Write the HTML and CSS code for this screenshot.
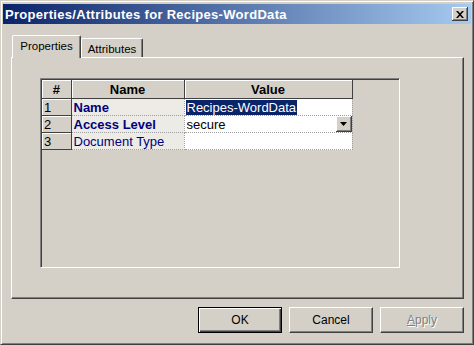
FILE: index.html
```html
<!DOCTYPE html>
<html>
<head>
<meta charset="utf-8">
<title>Properties/Attributes for Recipes-WordData</title>
<link rel="stylesheet" href="styles.css">
</head>
<body>
<div class="window">
  <div class="titlebar">
    <span class="title">Properties/Attributes for Recipes-WordData</span>
    <span class="close"><svg width="8" height="7" viewBox="0 0 8 7"><path d="M0 0h2l2 2.2L6 0h2L5 3.5 8 7H6L4 4.8 2 7H0l3-3.5z" fill="#000"/></svg></span>
  </div>
  <div class="tabs">
    <div class="tab active">Properties</div>
    <div class="tab">Attributes</div>
  </div>
  <div class="panel">
    <div class="gridbox">
      <table class="grid">
        <colgroup><col class="c-num"><col class="c-name"><col class="c-val"></colgroup>
        <thead>
          <tr><th>#</th><th>Name</th><th>Value</th></tr>
        </thead>
        <tbody>
          <tr>
            <td class="num">1</td>
            <td class="name bold">Name</td>
            <td class="val"><span class="sel">Recipes-WordData</span></td>
          </tr>
          <tr>
            <td class="num">2</td>
            <td class="name bold">Access Level</td>
            <td class="val"><div class="combo"><span>secure</span><span class="drop"><svg width="7" height="4" viewBox="0 0 7 4"><path d="M0 0h7L3.5 4z" fill="#000"/></svg></span></div></td>
          </tr>
          <tr>
            <td class="num">3</td>
            <td class="name">Document Type</td>
            <td class="val"></td>
          </tr>
        </tbody>
      </table>
    </div>
  </div>
  <div class="buttons">
    <button class="btn default">OK</button>
    <button class="btn">Cancel</button>
    <button class="btn disabled"><u>A</u>pply</button>
  </div>
</div>
</body>
</html>
```
FILE: styles.css
```css
html, body {
  margin: 0;
  background: #d4d0c8;
}

.window {
  box-sizing: border-box;
  width: 474px;
  height: 345px;
  border: 1px solid;
  border-color: #d4d0c8 #404040 #404040 #d4d0c8;
  box-shadow: inset 1px 1px #fff, inset -1px -1px #808080;
  padding: 3px 2px 2px 2px;
  font-family: "Liberation Sans", Arial, sans-serif;
}

.titlebar {
  height: 20px;
  display: flex;
  align-items: center;
  justify-content: space-between;
  padding: 0 3px 0 2px;
  background: linear-gradient(to right, #0a246a, #a6caf0);
}

.title {
  color: #fff;
  font-weight: bold;
  font-size: 13px;
  letter-spacing: 0.3px;
}

.close {
  box-sizing: border-box;
  width: 16px;
  height: 14px;
  display: flex;
  align-items: center;
  justify-content: center;
  background: #d4d0c8;
  box-shadow: inset -1px -1px #404040, inset 1px 1px #fff, inset -2px -2px #808080;
}

.tabs {
  display: flex;
  align-items: flex-end;
  height: 22px;
  margin: 11px 0 0 9px;
  position: relative;
  z-index: 1;
}

.tab {
  box-sizing: border-box;
  height: 19px;
  width: 62px;
  font-size: 11.5px;
  display: flex;
  align-items: center;
  justify-content: center;
  background: #d4d0c8;
  border-top: 1px solid #fff;
  border-left: 1px solid #fff;
  border-right: 1px solid #404040;
  box-shadow: inset -1px 0 #808080;
  border-radius: 2px 2px 0 0;
  padding-top: 1px;
}

.tab.active {
  width: 69px;
  height: 23px;
  margin-bottom: -1px;
  padding-bottom: 3px;
}

.panel {
  box-sizing: border-box;
  width: 453px;
  height: 242px;
  margin-left: 8px;
  border-top: 1px solid #fff;
  border-left: 1px solid #fff;
  border-right: 1px solid #404040;
  border-bottom: 1px solid #404040;
  box-shadow: inset -1px -1px #808080;
  padding: 20px 0 0 28px;
}

.gridbox {
  box-sizing: border-box;
  width: 360px;
  height: 190px;
  border-top: 1px solid #808080;
  border-left: 1px solid #808080;
  border-right: 1px solid #fff;
  border-bottom: 1px solid #fff;
  box-shadow: inset 1px 1px #404040, inset -1px -1px #d4d0c8;
  padding: 1px 0 0 1px;
}

.grid {
  border-collapse: collapse;
  table-layout: fixed;
  width: 310px;
  font-size: 13px;
}

.c-num { width: 29px; }
.c-name { width: 113px; }
.c-val { width: 168px; }

.grid th {
  height: 18px;
  padding: 0;
  font-weight: bold;
  color: #000;
  background: #d4d0c8;
  border-right: 1px solid #404040;
  border-bottom: 1px solid #404040;
  box-shadow: inset 1px 1px #fff;
}

.grid td {
  height: 16px;
  padding: 0;
  line-height: 15px;
  border-bottom: 1px dotted #a0a0a0;
  border-right: 1px dotted #a0a0a0;
  white-space: nowrap;
}

.grid td.num {
  background: #d4d0c8;
  border-right: 1px solid #404040;
  border-bottom: 1px solid #404040;
  box-shadow: inset 1px 1px #fff;
  padding-left: 2px;
}

.grid td.name {
  background: #ecebe6;
  color: #00007f;
  padding-left: 2px;
}

.grid td.bold {
  font-weight: bold;
}

.grid td.val {
  background: #fff;
  color: #000;
  padding-left: 1px;
}

.sel {
  background: #0a246a;
  color: #fff;
  padding: 0 1px;
}

.combo {
  display: flex;
  align-items: center;
  justify-content: space-between;
  padding-left: 1px;
}

.drop {
  box-sizing: border-box;
  width: 16px;
  height: 16px;
  display: flex;
  align-items: center;
  justify-content: center;
  background: #d4d0c8;
  box-shadow: inset -1px -1px #404040, inset 1px 1px #fff, inset -2px -2px #808080;
}

.buttons {
  display: flex;
  justify-content: flex-end;
  gap: 7px;
  margin: 8px 7px 0 0;
}

.btn {
  box-sizing: border-box;
  width: 84px;
  height: 26px;
  margin: 0;
  padding: 0;
  font-family: "Liberation Sans", Arial, sans-serif;
  font-size: 12px;
  color: #000;
  background: #d4d0c8;
  border: 1px solid;
  border-color: #fff #404040 #404040 #fff;
  box-shadow: inset -1px -1px #808080;
}

.btn.default {
  border: 1px solid #000;
  box-shadow: inset 1px 1px #fff, inset -1px -1px #404040, inset -2px -2px #808080;
}

.btn.disabled {
  color: #808080;
  text-shadow: 1px 1px #fff;
}

.btn.disabled u {
  text-decoration-color: #808080;
}
```
